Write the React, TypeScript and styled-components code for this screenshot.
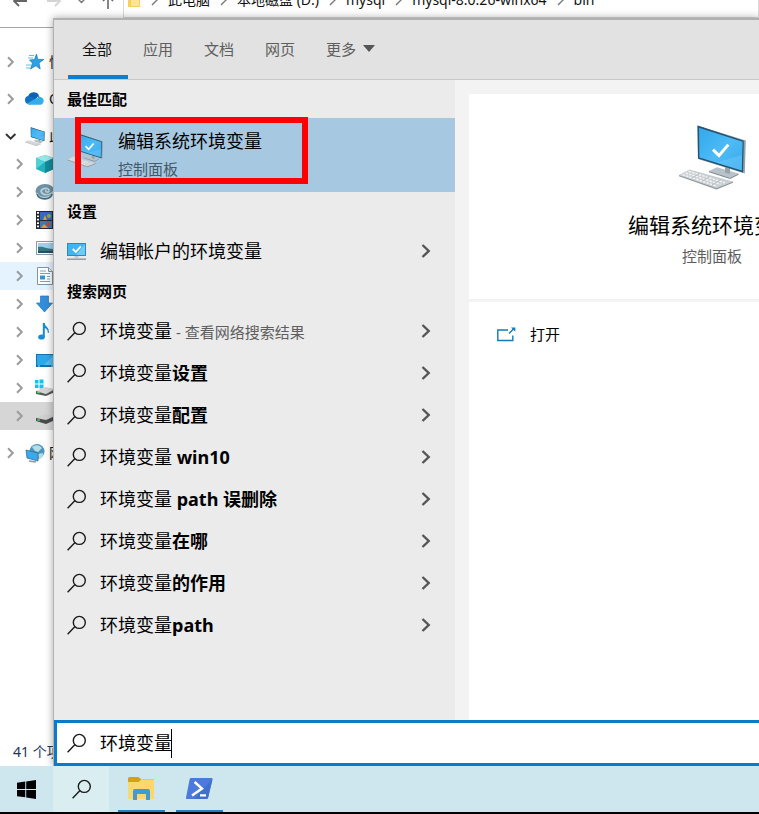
import React, { useState } from "react";
import styled, { createGlobalStyle } from "styled-components";

const GlobalStyle = createGlobalStyle`
  *, *::before, *::after { box-sizing: border-box; }
  html, body, #root { height: 100%; }
  body {
    margin: 0;
    overflow: hidden;
    background: #fff;
    color: #111;
    font: 15px/20px "Noto Sans", "Noto Sans CJK SC", sans-serif;
  }
  button, input { font: inherit; color: inherit; background: none; border: 0; padding: 0; margin: 0; text-align: left; }
  svg { display: block; flex: none; overflow: visible; }
`;

/* ---------- Desktop ---------- */

const Desktop = styled.div`
  position: relative;
  display: flex;
  flex-direction: column;
  height: 100vh;
  overflow: hidden;
`;

const Explorer = styled.div`
  flex: 1;
  min-height: 0;
  display: flex;
  flex-direction: column;
`;

const AddressRow = styled.nav`
  display: flex;
  align-items: center;
  flex: none;
  height: 56px;
  margin-top: -28px;
  border-bottom: 1px solid #a5a5a5;
  white-space: nowrap;
`;

const NavButtons = styled.div`
  display: flex;
  align-items: center;
  width: 123px;
  padding-left: 12px;
  gap: 18px;
`;

const Breadcrumbs = styled.div`
  flex: 1;
  display: flex;
  align-items: center;
  gap: 10px;
  height: 36px;
  padding-left: 4px;
  border: 1px solid #d9d9d9;
  font-size: 14px;
  overflow: hidden;
`;

const Tree = styled.div`
  flex: 1;
  display: flex;
  flex-direction: column;
  gap: 9px;
  width: 240px;
  padding-top: 20px;
`;

const TreeItem = styled.button<{ $depth?: number; $bg?: string }>`
  display: flex;
  align-items: center;
  gap: ${(p) => (p.$depth ? 10 : 9)}px;
  width: 100%;
  height: 28px;
  padding-left: ${(p) => (p.$depth ? 15 : 6)}px;
  background: ${(p) => p.$bg ?? "transparent"};
  font-size: 14px;
  white-space: nowrap;
`;

const TreeLabel = styled.span`
  margin-left: -5px;
`;

const StatusBar = styled.div`
  flex: none;
  height: 28px;
  padding: 4px 13px;
  font-size: 14px;
  color: #1c3560;
`;

/* ---------- Taskbar ---------- */

const Taskbar = styled.div`
  position: relative;
  z-index: 1;
  flex: none;
  display: flex;
  gap: 11px;
  height: 48px;
  background: #cee7ee;
  border-bottom: 2px solid #000;
`;

const TaskGroup = styled.div`
  display: flex;
  margin-right: -2px;
`;

const TaskButton = styled.button<{ $width: number; $lit?: boolean; $running?: boolean }>`
  display: flex;
  align-items: center;
  justify-content: center;
  width: ${(p) => p.$width}px;
  height: 46px;
  background: ${(p) => (p.$lit ? "#daeef2" : "transparent")};
  border-bottom: ${(p) => (p.$running ? "2px solid #2380b8" : "0")};
`;

/* ---------- Search flyout ---------- */

const Flyout = styled.div`
  position: absolute;
  top: 18px;
  left: 53px;
  right: 0;
  bottom: 48px;
  display: flex;
  flex-direction: column;
  border: solid #b1b1b1;
  border-width: 2px 0 0 1px;
  background: #f3f3f3;
  box-shadow: 0 0 8px rgba(0, 0, 0, 0.35);
`;

const Tabs = styled.div`
  flex: none;
  display: flex;
  gap: 1px;
  height: 60px;
  padding-left: 14px;
  background: #e2e2e2;
  border-bottom: 1px solid #c8c8c8;
`;

const Tab = styled.button<{ $active?: boolean }>`
  display: flex;
  align-items: center;
  gap: 7px;
  padding: 2px 16px 0 14px;
  border-bottom: 4px solid ${(p) => (p.$active ? "#0a7fd3" : "transparent")};
  color: ${(p) => (p.$active ? "#111" : "#5e5e5e")};
`;

const Body = styled.div`
  flex: 1;
  min-height: 0;
  display: flex;
`;

const Results = styled.div`
  flex: 0 0 401px;
  background: #ebebeb;
`;

const Heading = styled.h2`
  display: flex;
  align-items: center;
  height: 38px;
  margin: 0;
  padding: 0 13px 1px;
  font-size: 15px;
  font-weight: 700;
  color: #000;
`;

const BestMatch = styled.button`
  position: relative;
  display: flex;
  gap: 15px;
  width: 100%;
  height: 74px;
  padding: 10px 13px;
  background: #a6c9e1;
`;

const MatchIcon = styled.span`
  padding-top: 5px;
`;

const MatchText = styled.span`
  display: flex;
  flex-direction: column;
  gap: 5px;
`;

const Highlight = styled.span`
  position: absolute;
  left: 21px;
  top: -1px;
  width: 233px;
  height: 67px;
  border: 6px solid #fe0000;
  pointer-events: none;
`;

const Primary = styled.span`
  font-size: 18px;
  line-height: 26px;
  color: #000;
  white-space: pre;
`;

const Secondary = styled.span`
  font-size: 15px;
  color: #5e5e5e;
`;

const MatchSecondary = styled(Secondary)`
  color: #43586a;
`;

const ResultRow = styled.button`
  display: flex;
  align-items: center;
  gap: 14px;
  width: 100%;
  height: 42px;
  padding: 0 24px 0 13px;
`;

const RowText = styled(Primary)`
  flex: 1;
`;

const Preview = styled.div`
  flex: 1;
  min-width: 0;
  display: flex;
  flex-direction: column;
  gap: 3px;
  padding: 14px 0 0 14px;
  overflow: hidden;
`;

const Summary = styled.section`
  flex: none;
  display: flex;
  flex-direction: column;
  align-items: center;
  min-width: 486px;
  height: 205px;
  padding-top: 31px;
  background: #fff;
`;

const Title = styled.h1`
  margin: 22px 0 7px;
  font-size: 21px;
  line-height: 28px;
  font-weight: 400;
  color: #000;
  white-space: nowrap;
`;

const Actions = styled.section`
  flex: 1;
  padding: 21px 28px;
  background: #fff;
`;

const ActionButton = styled.button`
  display: flex;
  align-items: center;
  gap: 14px;
  height: 22px;
  color: #000;
`;

const SearchBox = styled.label`
  flex: none;
  display: flex;
  align-items: center;
  height: 46px;
  padding-left: 10px;
  gap: 14px;
  background: #fff;
  border: 3px solid #0a7ac9;
  border-right: 0;
`;

const Query = styled.span`
  display: flex;
  align-items: center;
`;

const SearchInput = styled.input`
  field-sizing: content;
  font-size: 18px;
  line-height: 26px;
  color: #000;
  outline: none;
  caret-color: transparent;
`;

const Caret = styled.span`
  width: 1px;
  height: 29px;
  margin-left: -1px;
  background: #000;
`;

/* ---------- Icons ---------- */

const Chevron = () => (
  <svg width="10" height="14" viewBox="0 0 10 14" fill="none" stroke="#555" strokeWidth="2.4">
    <path d="M1.5 1 7.7 7 1.5 13" />
  </svg>
);

const TreeChevron = ({ open }: { open?: boolean }) => (
  <svg width="10" height="12" viewBox="0 0 10 12" fill="none" stroke={open ? "#333" : "#9b9b9b"} strokeWidth="2">
    <path d={open ? "M0 4 4.7 8.7 9.4 4" : "M2 1.2 6.8 6 2 10.8"} />
  </svg>
);

const CrumbArrow = () => (
  <svg width="7" height="12" viewBox="0 0 7 12" fill="none" stroke="#777" strokeWidth="1.4">
    <path d="M1 1 6 6 1 11" />
  </svg>
);

const Magnifier = () => (
  <svg width="19" height="19" viewBox="0 0 19 19" fill="none" stroke="#1a1a1a" strokeWidth="1.4">
    <circle cx="12.3" cy="6.4" r="6" />
    <path d="M8 10.6.6 18.2" />
  </svg>
);

const Computer = ({ width, check = true, id }: { width: number; check?: boolean; id: string }) => (
  <svg width={width} height={Math.round((width * 64) / 68)} viewBox="0 0 68 64">
    <defs>
      <linearGradient id={id} x1="0" y1="0" x2="1" y2="1">
        <stop offset="0" stopColor="#34a8ec" />
        <stop offset="0.55" stopColor="#4dbbf7" />
        <stop offset="1" stopColor="#3aa6ea" />
      </linearGradient>
    </defs>
    <path d="M31 46 39 42.3 60.5 48.5 52 52.8Z" fill="#b9c2c8" />
    <path d="M31 46 52 52.8 60.5 48.5v1.2L52 54 31 47.2Z" fill="#7f8b93" />
    <path d="M47 41h5v8l-5-1.3Z" fill="#98a4ab" />
    <path d="M19.5.5 67.8 15.5 66.8 48.5 20 34Z" fill="#8fa2ae" />
    <path d="M19.5.5 65.8 15.8 65 47.4 20 33.6Z" fill="#24536f" />
    <path d="M21 2.7 64.6 16.8 63.8 45.6 21.4 32.4Z" fill={`url(#${id})`} />
    <path d="M64 30 38 37.5 63.8 45.6Z" fill="#6cc9fa" opacity=".45" />
    <path d="M1 50 11.5 44.5 55 56.5 38.5 63Z" fill="#c9ced2" />
    <path d="M1 50 38.5 63 55 56.5v1.3L38.5 64.4 1 51.2Z" fill="#8f999f" />
    <path
      d="M4.5 49.6 39 61.2M7.5 48 42.5 59.4M10.5 46.3 47 57.8"
      stroke="#f1f3f4"
      strokeWidth="1.5"
      strokeDasharray="2.6 1"
    />
    <path d="M14 53 22 48M24 56.5 32 51M34 60 43 54.5" stroke="#b0b8bd" strokeWidth=".8" />
    {check && <path d="M35 24.6 41 30.6 50.3 19.6" fill="none" stroke="#fff" strokeWidth="3" />}
  </svg>
);

const FlatMonitor = () => (
  <svg width="19" height="19" viewBox="0 0 19 19">
    <path d="M0 1h19v13H0z" fill="#3787b4" />
    <path d="M1 2h17v11H1z" fill="#41b5f1" />
    <path d="M18 2v11H9Z" fill="#6dcbf8" />
    <path d="M7.5 14h4v2h-4z" fill="#c3ccd1" />
    <path d="M0 16.5h19v1.4H0z" fill="#8697a5" />
    <path d="m5.8 7 3 3 5-5.6" fill="none" stroke="#fff" strokeWidth="1.8" />
  </svg>
);

const OpenIcon = () => (
  <svg width="19" height="15" viewBox="0 0 19 15" fill="none" stroke="#1478bd" strokeWidth="1.4">
    <path d="M11 3H.8v10.5h15V8.5M12 6.5 16.5 2" />
    <path d="M14 .5h4.3v4.3Z" fill="#1478bd" stroke="none" />
  </svg>
);

const Icon20 = ({ children }: { children: React.ReactNode }) => (
  <svg width="20" height="20" viewBox="0 0 20 20">
    {children}
  </svg>
);

const icons = {
  star: (
    <Icon20>
      <path d="m11.5 2 1.3 5.4 6 .1-4.8 3.5 1.2 6-4.3-3.2L5.5 17l2-6L4.5 8l5-.5Z" fill="#2ba0e2" stroke="#1779b4" strokeWidth=".7" />
      <path d="M4 3.5h5M3 6h5M1 13h5M1 16h4" stroke="#69bce8" />
    </Icon20>
  ),
  cloud: (
    <Icon20>
      <path d="M4 15.5a5 5 0 0 1-1-8 6 6 0 0 1 11-1l-9 9Z" fill="#0b62b4" />
      <path d="M13 7a5 5 0 0 1 3 8H4a4 4 0 0 1 0-8l9 4Z" fill="#1271c4" />
      <path d="M2 14.5 12 9a4 4 0 0 1 6.5 4c-1 2.5-2 2.8-4 2.8H4Z" fill="#35ade9" />
    </Icon20>
  ),
  cube: (
    <Icon20>
      <path d="m1 4 9-3 9 3v11l-9 4-9-4Z" fill="#21b1bd" />
      <path d="m1 4 9-3 9 3-9 4Z" fill="#9be6e8" />
      <path d="m10 8 9-4v11l-9 4Z" fill="#148b9c" />
      <path d="m1 4 9 4-9 7Z" fill="#4ed2d5" />
    </Icon20>
  ),
  swirl: (
    <Icon20>
      <ellipse cx="10" cy="9" rx="9.5" ry="7" fill="#6e91a3" />
      <path d="M2 11c2 7 15 6 17-2-4 5-12 5-13 0 2-4 9-3 8 0-1 2-4 1-3-1" fill="none" stroke="#b7d0da" strokeWidth="1.7" />
      <path d="M2 12c2 6 13 7 15 0" fill="none" stroke="#426e84" strokeWidth="1.6" />
    </Icon20>
  ),
  film: (
    <Icon20>
      <path d="M1 1h19v18H1z" fill="#26272e" />
      <path d="M5 2h12v8H5z" fill="#3869c0" />
      <path d="M5 11h12v7H5z" fill="#4776a8" />
      <path d="m8 10 2-5 2 5ZM6 18l3-4 4 4Z" fill="#d7a136" />
      <circle cx="14" cy="6" r="2" fill="#8fae4a" />
      <circle cx="13" cy="14" r="2" fill="#b84d3c" />
      <path d="M3 2v17M19 2v17" stroke="#fff" strokeWidth="2" strokeDasharray="1.7 1.7" />
    </Icon20>
  ),
  photo: (
    <Icon20>
      <path d="M1.5 3.5h18v13h-18z" fill="#fff" stroke="#8d9aa2" />
      <path d="M3 5h15v10H3z" fill="#9fd1ed" />
      <path d="M3 9c5-1 8 2 15 2v4H3Z" fill="#3e7381" />
      <path d="M3 13h15v2H3z" fill="#234f70" />
    </Icon20>
  ),
  doc: (
    <Icon20>
      <path d="M2.5 1.5h11l4 4v13h-15z" fill="#fff" stroke="#86939b" />
      <path d="M5 5h6M5 7.5h10M5 15.5h10M12 10.5h3M12 13h3" stroke="#69a7cf" />
      <path d="M5 9.5h5v4H5z" fill="#3993c8" />
      <path d="M13.5 1.5v4h4" fill="#e7edf1" stroke="#86939b" />
    </Icon20>
  ),
  down: (
    <Icon20>
      <path d="M5.5 2h8v7h4L9.5 18 1.5 9h4Z" fill="#348dda" stroke="#2275bd" strokeWidth=".7" />
    </Icon20>
  ),
  note: (
    <Icon20>
      <ellipse cx="6.5" cy="15" rx="3.3" ry="2.6" fill="#168bd8" />
      <path d="M7.8 1h2c0 4 5 4 4 10h-1c0-3-1-4-3-5v9h-2Z" fill="#168bd8" />
    </Icon20>
  ),
  desktop: (
    <Icon20>
      <path d="M1 4h19v13H1z" fill="#1473ae" />
      <path d="M2 5h17v10H2z" fill="#2ea8ed" />
      <path d="M19 5v10H9Z" fill="#54bdf5" />
      <path d="M3 16h2M16 16h2" stroke="#91d8ff" />
    </Icon20>
  ),
  winDrive: (
    <Icon20>
      <path d="M0 2h3.5v3.5H0zM4.5 1.5H8.5v4H4.5zM0 6.5h3.5V10H0zM4.5 6.5h4v4h-4z" fill="#17c1ee" />
      <path d="m1 13 9-4 10 2-9 5Z" fill="#d3d5d5" />
      <path d="m1 13 10 3 9-5v3l-9 4-10-2Z" fill="#555a5d" />
      <path d="M2 14.5h3" stroke="#48d85d" strokeWidth="1.3" />
    </Icon20>
  ),
  drive: (
    <Icon20>
      <path d="m1 12 9-4 10 2-9 4Z" fill="#cfcfcf" />
      <path d="m1 12 10 2 9-4v4l-9 4-10-3Z" fill="#484c4f" />
      <path d="M2 14h3" stroke="#48d85d" strokeWidth="1.3" />
    </Icon20>
  ),
  network: (
    <Icon20>
      <circle cx="12" cy="8.5" r="7.5" fill="#4b97ba" />
      <path d="M7 4c4-3 8-2 10 1l-4 4-3-1ZM13 11l5-1c0 4-2 6-4 6Z" fill="#b5dce6" />
      <path d="m1 7 12 3v8L2 15Z" fill="#39aaf0" stroke="#416b87" strokeWidth=".8" />
      <path d="m4 18 7 1" stroke="#849ba7" strokeWidth="1.5" />
    </Icon20>
  ),
};

const WindowsLogo = () => (
  <svg width="19" height="19" viewBox="0 0 20 20" fill="#000">
    <path d="M0 3 8.7 1.7v7.7H0ZM9.7 1.6 20 0v9.4H9.7ZM0 10.4h8.7v7.8L0 17ZM9.7 10.4H20V20L9.7 18.4Z" />
  </svg>
);

const FolderIcon = () => (
  <svg width="27" height="23" viewBox="0 0 27 23">
    <path d="M0 2a2 2 0 0 1 2-2h8l3 2h13v20H0Z" fill="#f3c64f" />
    <path d="M0 2a2 2 0 0 1 2-2h8l3 2-2 3H0Z" fill="#d99f12" />
    <path d="M0 5h11l2-2h13v19H0z" fill="#fbd86d" />
    <path d="M5 23V14a2 2 0 0 1 2-2h13a2 2 0 0 1 2 2v9h-4v-6H9v6Z" fill="#3f9bd3" />
    <path d="M9 17h9v5H9z" fill="#fbd86d" />
  </svg>
);

const PowerShellIcon = () => (
  <svg width="27" height="21" viewBox="0 0 27 21">
    <path d="M5 0h20.5a1 1 0 0 1 1 1.3L22 20a1.5 1.5 0 0 1-1.4 1H1a1 1 0 0 1-1-1.3L3.7 1A1.4 1.4 0 0 1 5 0Z" fill="#4a7bdc" />
    <path d="M26.5 1.3 22 20a1.5 1.5 0 0 1-1.4 1H8Z" fill="#4070cc" />
    <path d="m8.6 4 7.4 6.6-10 6.8M14 17.4h6" fill="none" stroke="#fff" strokeWidth="2.4" />
  </svg>
);

const SmallFolder = () => (
  <svg width="13" height="15" viewBox="0 0 13 15">
    <path d="M0 0h6l2 2h4v13H0Z" fill="#f5cf62" />
    <path d="M3 2h8v12H3z" fill="#ffe49a" />
  </svg>
);

/* ---------- Data ---------- */

const tabs = ["全部", "应用", "文档", "网页"];

const crumbs = ["此电脑", "本地磁盘 (D:)", "mysql", "mysql-8.0.26-winx64", "bin"];

const folders: { label: string; icon: React.ReactNode; bg?: string }[] = [
  { label: "3D 对象", icon: icons.cube },
  { label: "Creative Cloud", icon: icons.swirl },
  { label: "视频", icon: icons.film },
  { label: "图片", icon: icons.photo },
  { label: "文档", icon: icons.doc, bg: "#e5f3ff" },
  { label: "下载", icon: icons.down },
  { label: "音乐", icon: icons.note },
  { label: "桌面", icon: icons.desktop },
  { label: "本地磁盘 (C:)", icon: icons.winDrive },
  { label: "本地磁盘 (D:)", icon: icons.drive, bg: "#d6d6d6" },
];

const suggestions = ["设置", "配置", " win10", " path 误删除", "在哪", "的作用", "path"];

/* ---------- Page ---------- */

const ExplorerWindow = () => (
  <Explorer>
    <AddressRow aria-label="地址">
      <NavButtons>
        <button aria-label="后退">
          <svg width="15" height="12" viewBox="0 0 15 12" fill="none" stroke="#666" strokeWidth="1.8">
            <path d="M15 7H2M7 2 2 7l5 5" />
          </svg>
        </button>
        <button aria-label="前进">
          <svg width="15" height="12" viewBox="0 0 15 12" fill="none" stroke="#d5d5d5" strokeWidth="1.8">
            <path d="M2 7h13M10 2l5 5-5 5" />
          </svg>
        </button>
        <button aria-label="最近">
          <svg width="7" height="8" viewBox="0 0 7 8" fill="none" stroke="#777" strokeWidth="1.4">
            <path d="m0 3 3.5 3.5L7 3" />
          </svg>
        </button>
        <button aria-label="上移">
          <svg width="10" height="18" viewBox="0 0 10 18" fill="none" stroke="#666" strokeWidth="1.6">
            <path d="M5 18V5M0 10l5-5 5 5" />
          </svg>
        </button>
      </NavButtons>
      <Breadcrumbs>
        <SmallFolder />
        {crumbs.map((c) => (
          <React.Fragment key={c}>
            <CrumbArrow />
            <button>{c}</button>
          </React.Fragment>
        ))}
      </Breadcrumbs>
    </AddressRow>
    <Tree>
      <TreeItem>
        <TreeChevron />
        {icons.star}
        <TreeLabel>快速访问</TreeLabel>
      </TreeItem>
      <TreeItem>
        <TreeChevron />
        {icons.cloud}
        <TreeLabel>OneDrive</TreeLabel>
      </TreeItem>
      <div>
        <TreeItem>
          <TreeChevron open />
          <Computer width={20} check={false} id="pcTree" />
          <TreeLabel>此电脑</TreeLabel>
        </TreeItem>
        {folders.map((f) => (
          <TreeItem key={f.label} $depth={1} $bg={f.bg}>
            <TreeChevron />
            {f.icon}
            <TreeLabel>{f.label}</TreeLabel>
          </TreeItem>
        ))}
      </div>
      <TreeItem>
        <TreeChevron />
        {icons.network}
        <TreeLabel>网络</TreeLabel>
      </TreeItem>
    </Tree>
    <StatusBar>41 个项目</StatusBar>
  </Explorer>
);

export default function App() {
  const [query, setQuery] = useState("环境变量");
  return (
    <>
      <GlobalStyle />
      <Desktop>
        <ExplorerWindow />
        <Taskbar>
          <TaskGroup>
            <TaskButton $width={53} aria-label="开始">
              <WindowsLogo />
            </TaskButton>
            <TaskButton $width={56} $lit aria-label="搜索">
              <Magnifier />
            </TaskButton>
          </TaskGroup>
          <TaskButton $width={47} $running aria-label="文件资源管理器">
            <FolderIcon />
          </TaskButton>
          <TaskButton $width={47} $running aria-label="PowerShell">
            <PowerShellIcon />
          </TaskButton>
        </Taskbar>
        <Flyout>
          <Tabs>
            {tabs.map((t, i) => (
              <Tab key={t} $active={i === 0}>
                {t}
              </Tab>
            ))}
            <Tab>
              更多
              <svg width="12" height="7" viewBox="0 0 12 7" fill="#555">
                <path d="M0 0h12L6 7Z" />
              </svg>
            </Tab>
          </Tabs>
          <Body>
            <Results>
              <Heading>最佳匹配</Heading>
              <BestMatch>
                <MatchIcon>
                  <Computer width={36} id="pcMatch" />
                </MatchIcon>
                <MatchText>
                  <Primary>编辑系统环境变量</Primary>
                  <MatchSecondary>控制面板</MatchSecondary>
                </MatchText>
                <Highlight />
              </BestMatch>
              <Heading>设置</Heading>
              <ResultRow>
                <FlatMonitor />
                <RowText>编辑帐户的环境变量</RowText>
                <Chevron />
              </ResultRow>
              <Heading>搜索网页</Heading>
              <ResultRow>
                <Magnifier />
                <RowText>
                  环境变量<Secondary> - 查看网络搜索结果</Secondary>
                </RowText>
                <Chevron />
              </ResultRow>
              {suggestions.map((s) => (
                <ResultRow key={s}>
                  <Magnifier />
                  <RowText>
                    环境变量<b>{s}</b>
                  </RowText>
                  <Chevron />
                </ResultRow>
              ))}
            </Results>
            <Preview>
              <Summary>
                <Computer width={68} id="pcPreview" />
                <Title>编辑系统环境变量</Title>
                <Secondary>控制面板</Secondary>
              </Summary>
              <Actions>
                <ActionButton>
                  <OpenIcon />
                  打开
                </ActionButton>
              </Actions>
            </Preview>
          </Body>
          <SearchBox>
            <Magnifier />
            <Query>
              <SearchInput
                aria-label="搜索"
                value={query}
                onChange={(e) => setQuery(e.target.value)}
              />
              <Caret />
            </Query>
          </SearchBox>
        </Flyout>
      </Desktop>
    </>
  );
}
